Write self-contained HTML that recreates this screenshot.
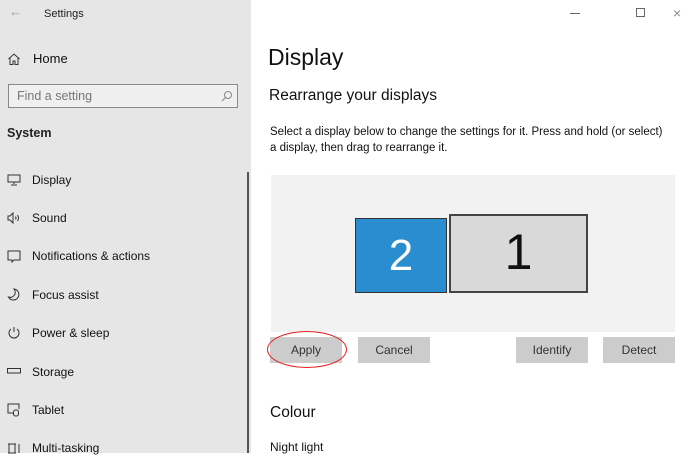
<!DOCTYPE html>
<html><head><meta charset="utf-8"><style>
*{margin:0;padding:0;box-sizing:border-box}
body{width:682px;height:458px;overflow:hidden;background:#fff;font-family:"Liberation Sans",sans-serif;color:#000;position:relative}
.a{position:absolute;white-space:nowrap}
#side{position:absolute;left:0;top:0;width:251px;height:453px;background:#e6e6e6}
.item{position:absolute;left:32px;font-size:12px;color:#111}
.ic{position:absolute;left:7px}
.btn{position:absolute;top:337px;height:26px;width:72px;background:#cccccc;font-size:12px;text-align:center;line-height:26px;color:#333}
</style></head><body>
<div id="side">
 <div class="a" style="left:9px;top:4px;font-size:13px;color:#999">&#8592;</div>
 <div class="a" style="left:44px;top:8px;font-size:11px;color:#222">Settings</div>
 <svg class="a" style="left:7px;top:52px" width="14" height="14" viewBox="0 0 14 14" fill="none" stroke="#333" stroke-width="1"><path d="M1.5 7L7 2l5.5 5M3 6v6.5h3V9h2v3.5h3V6"/></svg>
 <div class="a" style="left:33px;top:51px;font-size:13px;color:#111">Home</div>
 <div class="a" style="left:8px;top:84px;width:230px;height:24px;border:1px solid #8a8a8a;background:#efefef"></div>
 <div class="a" style="left:17px;top:89px;font-size:12.5px;color:#777">Find a setting</div>
 <svg class="a" style="left:221px;top:90px" width="12" height="12" viewBox="0 0 12 12" fill="none" stroke="#888"><circle cx="7" cy="5" r="3.5"/><path d="M4.5 7.5L1 11"/></svg>
 <div class="a" style="left:7px;top:126px;font-size:12.5px;font-weight:bold;color:#222">System</div>
 <svg class="ic a" style="top:174px" width="14" height="12" viewBox="0 0 14 12" fill="none" stroke="#333"><rect x="1" y="1" width="12" height="7"/><path d="M7 8v2M4 11h6"/></svg>
 <div class="item a" style="top:173px">Display</div>
 <svg class="ic a" style="top:212px" width="14" height="12" viewBox="0 0 14 12" fill="none" stroke="#333"><path d="M1 4h2l3-3v10L3 8H1z"/><path d="M8.5 4.5q1 1.5 0 3M10.5 3q2 3 0 6"/></svg>
 <div class="item a" style="top:211px">Sound</div>
 <svg class="ic a" style="top:250px" width="14" height="13" viewBox="0 0 14 13" fill="none" stroke="#333"><path d="M1 1h12v9H7l-2 2v-2H1z"/></svg>
 <div class="item a" style="top:249px">Notifications &amp; actions</div>
 <svg class="ic a" style="top:288px" width="14" height="13" viewBox="0 0 14 13" fill="none" stroke="#333"><path d="M7 1a5.5 5.5 0 1 1-5.5 8A5 5 0 0 0 7 1z"/></svg>
 <div class="item a" style="top:288px">Focus assist</div>
 <svg class="ic a" style="top:326px" width="14" height="13" viewBox="0 0 14 13" fill="none" stroke="#333"><path d="M4 3a5 5 0 1 0 6 0M7 1v5"/></svg>
 <div class="item a" style="top:326px">Power &amp; sleep</div>
 <svg class="ic a" style="top:368px" width="14" height="6" viewBox="0 0 14 6" fill="none" stroke="#333"><rect x="0.5" y="0.5" width="13" height="4.5"/></svg>
 <div class="item a" style="top:365px">Storage</div>
 <svg class="ic a" style="top:403px" width="14" height="14" viewBox="0 0 14 14" fill="none" stroke="#333"><path d="M6 10H1V1h11v5"/><rect x="6.5" y="7" width="5" height="6" rx="2"/></svg>
 <div class="item a" style="top:403px">Tablet</div>
 <svg class="ic a" style="top:443px" width="14" height="12" viewBox="0 0 14 12" fill="none" stroke="#333"><path d="M1 1h8M1 10h8M2 1v9M8 1v9M12 1v9"/></svg>
 <div class="item a" style="top:441px">Multi-tasking</div>
 <div class="a" style="left:247px;top:172px;width:2px;height:281px;background:#555"></div>
</div>
<div class="a" style="left:570px;top:13px;width:10px;height:1px;background:#666"></div>
<div class="a" style="left:636px;top:8px;width:9px;height:9px;border:1px solid #666"></div>
<div class="a" style="left:673px;top:5px;font-size:14px;color:#888">×</div>
<div class="a" style="left:268px;top:44px;font-size:23px;color:#111">Display</div>
<div class="a" style="left:269px;top:87px;font-size:15.5px;color:#111">Rearrange your displays</div>
<div class="a" style="left:270px;top:124px;font-size:11.5px;line-height:16px;color:#111">Select a display below to change the settings for it. Press and hold (or select)<br>a display, then drag to rearrange it.</div>
<div class="a" style="left:271px;top:175px;width:404px;height:157px;background:#f2f2f2"></div>
<div class="a" style="left:355px;top:218px;width:92px;height:75px;background:#2a8dd0;border:1px solid #333;color:#fff;font-size:44px;text-align:center;line-height:74px">2</div>
<div class="a" style="left:449px;top:214px;width:139px;height:79px;background:#d9d9d9;border:2px solid #444;color:#111;font-size:50px;text-align:center;line-height:72px">1</div>
<div class="btn" style="left:270px">Apply</div>
<div class="btn" style="left:358px">Cancel</div>
<div class="btn" style="left:516px">Identify</div>
<div class="btn" style="left:603px">Detect</div>
<div class="a" style="left:267px;top:331px;width:80px;height:37px;border:1px solid #e02020;border-radius:50%"></div>
<div class="a" style="left:270px;top:404px;font-size:15.5px;color:#111">Colour</div>
<div class="a" style="left:270px;top:440px;font-size:12px;color:#111">Night light</div>
</body></html>
